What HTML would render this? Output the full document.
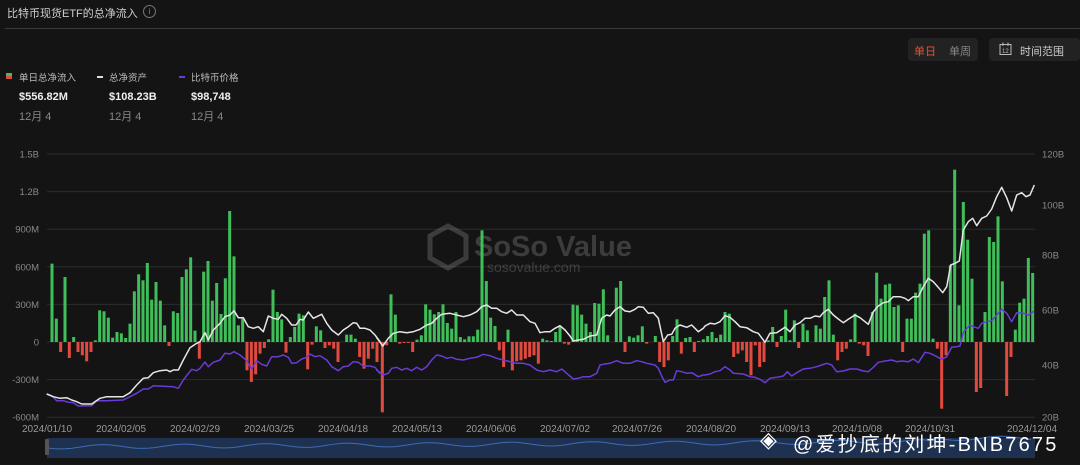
<!DOCTYPE html>
<html><head><meta charset="utf-8">
<style>
body{margin:0;width:1080px;height:465px;background:#141414;overflow:hidden;font-family:"Liberation Sans","Noto Sans CJK SC",sans-serif;color:#ddd;position:relative}
.a{position:absolute;white-space:nowrap}
</style></head><body>
<div class="a" style="left:7px;top:5px;font-size:11px;color:#d0d0d0">比特币现货ETF的总净流入</div>
<div class="a" style="left:143px;top:5px;width:11px;height:11px;border:1px solid #777;border-radius:50%;font-size:8px;color:#888;text-align:center;line-height:11px">i</div>
<div class="a" style="left:5px;top:28px;width:1075px;height:1px;background:#3a3a3a"></div>
<div class="a" style="left:908px;top:38px;width:70px;height:23px;background:#222;border-radius:4px"></div>
<div class="a" style="left:914px;top:43px;font-size:11px;color:#e0552f">单日</div>
<div class="a" style="left:949px;top:43px;font-size:11px;color:#888">单周</div>
<div class="a" style="left:989px;top:38px;width:91px;height:23px;background:#222;border-radius:4px"></div>
<svg class="a" style="left:999px;top:42px" width="13" height="14"><rect x="1" y="2.5" width="11" height="10" fill="none" stroke="#bbb"/><line x1="4" y1="0.5" x2="4" y2="4" stroke="#bbb"/><line x1="9" y1="0.5" x2="9" y2="4" stroke="#bbb"/><text x="3" y="11" font-size="6" fill="#bbb">12</text></svg>
<div class="a" style="left:1020px;top:43px;font-size:11px;color:#ccc">时间范围</div>

<div class="a" style="left:6px;top:73px;width:6px;height:3px;background:#3fbf5a"></div>
<div class="a" style="left:6px;top:76px;width:6px;height:3px;background:#e04a3f"></div>
<div class="a" style="left:19px;top:70px;font-size:9.5px;color:#bbb">单日总净流入</div>
<div class="a" style="left:97px;top:76px;width:6px;height:2px;background:#ddd"></div>
<div class="a" style="left:109px;top:70px;font-size:9.5px;color:#bbb">总净资产</div>
<div class="a" style="left:179px;top:76px;width:6px;height:2px;background:#6a3bd6"></div>
<div class="a" style="left:191px;top:70px;font-size:9.5px;color:#bbb">比特币价格</div>
<div class="a" style="left:19px;top:91px;font-size:11px;font-weight:bold;color:#f0f0f0">$556.82M</div>
<div class="a" style="left:109px;top:91px;font-size:11px;font-weight:bold;color:#f0f0f0">$108.23B</div>
<div class="a" style="left:191px;top:91px;font-size:11px;font-weight:bold;color:#f0f0f0">$98,748</div>
<div class="a" style="left:19px;top:108px;font-size:11px;color:#888">12月 4</div>
<div class="a" style="left:109px;top:108px;font-size:11px;color:#888">12月 4</div>
<div class="a" style="left:191px;top:108px;font-size:11px;color:#888">12月 4</div>

<svg id="ch" class="a" style="left:0;top:0" width="1080" height="465"></svg>
<div class="a" style="left:760px;top:427px;font-size:22px;color:#fff">◈</div>
<div class="a" style="left:793px;top:428px;font-size:20px;color:#fff;letter-spacing:2.2px">@爱抄底的刘坤-BNB7675</div>
<script>
var s='';
var L=['1.5B','1.2B','900M','600M','300M','0','-300M','-600M'];
var R=['120B','100B','80B','60B','40B','20B'];
for(var i=0;i<8;i++){var y=154+i*37.6;s+='<line x1="47" x2="1035" y1="'+y+'" y2="'+y+'" stroke="#2c2c2c"/>';
s+='<text x="39" y="'+(y+3.5)+'" font-size="9.5" fill="#888" text-anchor="end">'+L[i]+'</text>';}
var ry=[154,205,255,310,365,417];
for(i=0;i<6;i++)s+='<text x="1042" y="'+(ry[i]+3.5)+'" font-size="9.5" fill="#888">'+R[i]+'</text>';
var D=['2024/01/10','2024/02/05','2024/02/29','2024/03/25','2024/04/18','2024/05/13','2024/06/06','2024/07/02','2024/07/26','2024/08/20','2024/09/13','2024/10/08','2024/10/31','2024/12/04'];
var dx=[47,121,195,269,343,417,491,565,637,711,785,857,930,1032];
for(i=0;i<14;i++)s+='<text x="'+dx[i]+'" y="432" font-size="10" fill="#999" text-anchor="middle">'+D[i]+'</text>';
s+='<g opacity="0.35"><path d="M430 236 l18 -10 18 10 v22 l-18 10 -18 -10z" fill="none" stroke="#888" stroke-width="5"/><text x="474" y="256" font-size="29" font-weight="bold" fill="#888">SoSo Value</text><text x="487" y="272" font-size="14" fill="#888">sosovalue.com</text></g>';
var z4=[36,235,49,70,62,-30,75,195,88,-48,101,15,114,-30,127,-40,140,-58,153,-30,166,5,179,95,192,92,205,73,218,13,231,30,244,26,257,12,270,55,283,152,296,203,309,185,322,237,335,127,348,180,361,124,374,50,387,-12,400,92,413,87,426,195,439,218,452,254,465,34,478,-50,491,211,504,243,517,124,530,177,543,84,556,191,569,393,582,257,595,50,608,70,621,-85,634,-120,647,-97,660,-35,673,-18,686,8,699,157,712,90,725,68,738,-32,751,15,764,45,777,85,790,80,803,-82,816,-8,829,47,842,35,855,-18,868,-10,881,-20,894,-60,920,22,933,22,946,10,959,-45,972,-80,985,-50,998,-20,1011,-60];
var z5=[37,-211,50,-10,63,143,76,82,89,-5,102,-3,115,-3,128,-30,141,7,154,20,167,113,180,97,193,83,206,90,219,113,232,57,245,40,258,90,271,15,284,8,297,17,310,17,323,37,336,335,349,183,362,73,375,48,388,-25,401,-75,414,37,427,-85,440,-58,453,-55,466,-50,479,-45,492,-40,505,-65,518,10,531,5,544,3,557,30,570,48,583,-5,596,-8,609,112,622,110,635,82,648,55,661,30,674,117,687,115,700,158,713,20,739,163,752,183,765,-30,778,17,791,13,804,20,817,47,830,-5,856,18,869,-60,882,-75,895,-55,908,18,921,68,934,-35,947,12,960,15,973,-30,986,3];
var z6=[10,8,23,18,36,30,49,12,62,22,75,90,88,85,101,-45,114,-35,127,-25,140,-60,153,-100,166,-10,179,-75,192,-60,205,5,218,45,231,-15,244,18,257,97,270,5,283,65,296,-18,309,55,322,35,348,50,361,40,374,135,387,185,400,22,413,-55,426,-30,439,-20,452,8,465,85,478,-5,491,-10,504,-42,517,90,530,208,543,130,556,172,569,175,582,105,595,110,608,-30,621,70,634,70,647,148,660,175,673,325,686,335,699,10,712,-20,725,-200,738,-40,751,230,764,517,777,110,790,420,803,307,816,190,829,-150,842,-138,855,90,868,315,881,300,894,377,907,182,920,-162,933,-45,946,37,959,118,972,130,985,252,998,207];
function bars(a,b){for(var k=0;k<a.length;k+=2){var x=b+a[k]/3-1.5,h=a[k+1]/3;
 if(h>=0)s+='<rect x="'+x+'" y="'+(342-h)+'" width="3" height="'+h+'" fill="#3fbf5a"/>';
 else s+='<rect x="'+x+'" y="342" width="3" height="'+(-h)+'" fill="#e04a3f"/>';}}
bars(z4,40);bars(z5,370);bars(z6,700);
var W=[[40,[20,732,40,740,60,745,80,743,95,750,110,755,125,762,155,762,180,745,200,740,250,740,270,728,290,705,310,685,325,683,340,668,360,662,380,660,390,665,400,660,415,660,430,630,450,593,470,580,480,575,495,548,505,570,520,540,540,520,555,500,570,495,582,482,595,503,610,503,625,530,640,535,655,530,670,545,685,498,700,505,715,508,725,493,740,505,755,525,768,525,780,508,790,510,805,486,820,505,830,500,845,493,860,520,875,540,895,555,910,540,925,530,940,518,950,520,960,535,975,535,990,540,1005,555,1020,575]],
[370,[20,563,38,588,55,565,70,550,90,545,110,548,130,545,150,538,170,525,185,520,200,505,215,493,240,490,260,495,280,500,300,495,320,485,335,470,350,465,365,475,380,475,395,485,410,490,425,480,440,495,460,495,480,515,495,520,510,548,525,545,540,545,555,535,570,527,585,540,600,558,610,573,625,570,640,568,660,558,680,555,695,505,710,495,720,498,735,480,750,470,765,483,780,485,795,478,805,470,820,472,835,490,850,488,865,505,880,575,893,555,905,553,915,535,930,525,950,532,965,525,985,545,1000,535]],
[700,[15,528,30,520,45,522,60,515,75,497,90,502,105,515,120,530,140,533,160,545,175,550,195,577,210,550,230,548,255,532,270,545,285,525,300,518,315,505,330,505,345,498,360,500,370,488,385,478,400,495,415,507,430,518,445,508,465,495,480,503,495,515,505,523,520,485,535,468,550,458,565,455,580,440,600,440,615,445,625,452,640,440,655,440,670,410,685,385,700,395,713,410,728,428,740,410,752,345,765,340,778,333,790,240,805,215,818,205,830,227,845,205,860,198,875,177,890,140,905,112,920,143,935,183,950,135,965,128,978,140,990,135,1003,105]]];
var P=[[40,[20,732,35,737,50,752,70,752,85,757,100,758,115,768,155,767,170,752,200,752,250,750,270,740,290,730,310,717,325,717,340,707,400,710,415,715,430,690,455,658,470,662,480,655,495,636,505,650,520,637,540,630,555,610,570,612,582,605,600,615,620,632,635,657,650,632,665,643,680,648,695,620,715,620,730,615,745,622,755,640,770,638,785,627,800,622,810,612,825,620,840,617,860,630,875,650,895,662,910,650,925,648,940,635,955,637,970,648,990,648,1005,652,1020,670]],
[370,[20,660,40,675,55,670,65,655,80,652,95,660,110,655,125,662,140,652,155,660,170,650,185,630,200,615,215,618,230,625,245,622,260,628,280,630,300,625,320,622,340,613,360,617,380,625,400,630,420,635,440,640,460,640,480,645,500,660,520,665,540,660,560,665,575,657,590,670,610,687,625,685,640,680,660,680,680,670,690,645,700,643,720,640,740,632,760,640,780,640,800,632,815,635,830,640,855,645,865,655,875,678,885,697,900,690,910,690,920,662,935,665,950,670,965,668,985,680,1000,675]],
[700,[15,675,30,672,45,665,60,662,75,650,90,660,100,670,130,672,150,680,165,682,180,688,195,698,210,685,230,682,250,678,262,665,275,678,290,668,310,657,330,655,350,650,365,645,380,640,395,645,410,665,430,663,450,657,470,657,490,663,505,665,520,652,535,637,555,633,575,630,590,635,605,633,625,635,640,627,655,638,675,607,690,610,705,617,725,628,740,620,755,592,770,590,780,588,790,547,810,525,820,530,835,535,845,520,860,515,875,512,890,495,905,478,920,490,935,515,950,488,970,490,985,495,1003,483]]];
function line(G,c){var p='';G.forEach(function(g){for(var k=0;k<g[1].length;k+=2)p+=(g[0]+g[1][k]/3).toFixed(1)+','+(150+g[1][k+1]/3).toFixed(1)+' ';});
s+='<polyline points="'+p+'" fill="none" stroke="'+c+'" stroke-width="1.5" stroke-linejoin="round"/>';}
line(P,'#6a3bd6');line(W,'#e6e6e6');
s+='<rect x="47" y="438" width="988" height="20" fill="#1f3150"/>';
var np='47,447 ';for(var x=47;x<=1035;x+=6){np+=x+','+(447-2*Math.sin(x/13)-((x-47)/988)*6+(x>930?-3:0))+' ';}
s+='<polyline points="'+np+'" fill="none" stroke="#3f6bb0" stroke-width="1"/>';
s+='<rect x="45" y="439" width="4" height="16" rx="1" fill="#555"/>';
document.getElementById('ch').innerHTML=s;
</script>
</body></html>
